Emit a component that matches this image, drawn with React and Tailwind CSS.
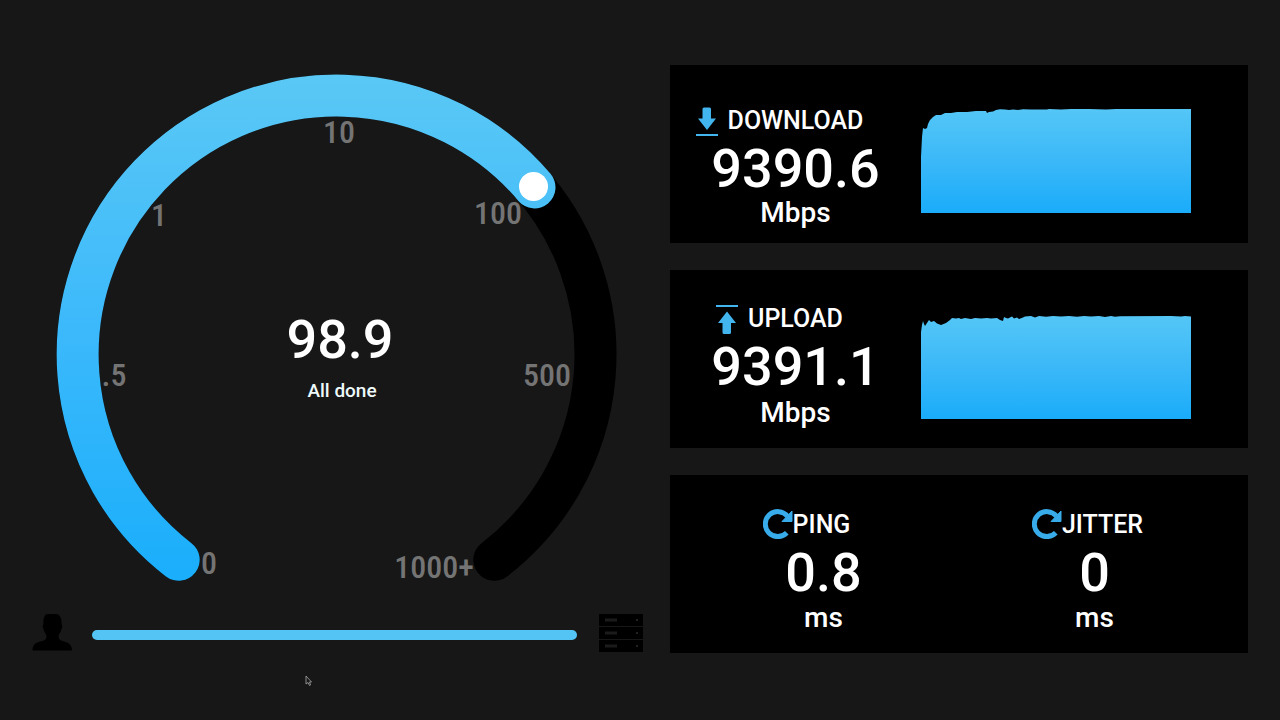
import React from "react";

const ticks = [
  { label: "0", x: 177, y: 499 },
  { label: ".5", x: 82, y: 311 },
  { label: "1", x: 127, y: 151 },
  { label: "10", x: 307, y: 68 },
  { label: "100", x: 466, y: 149 },
  { label: "500", x: 515, y: 311 },
  { label: "1000+", x: 402, y: 503 },
];

const downloadLine =
  "0,48 1,28 2,19 4,20 6,19 7,15 9,11 12,8 15,6 20,6 24,4 30,4 36,3 46,3 55,2 65,2 66,4 68,3 72,2.5 75,1 79,0.3 84,0.6 88,1 92,0.4 97,1 102,0.3 110,0.4 126,0.5 128,0.1 140,0.4 150,0.1 168,0.1 185,0.4 195,0 270,0";

const uploadLine =
  "0,17 1,10 2,6 3,9 4,11 6,8 8,5 10,7 13,6 16,8.5 20,10 25,8 29,5 31,3 35,3.5 38,3 40,4 44,3 50,4 54,3 60,3.5 66,3 70,3.5 76,3 79,5 82,6 83,2 85,3 87,3.5 91,1.5 93,3.5 96,2.5 98,4 102,2.5 104,1.5 110,1 114,2.5 118,1 125,1.8 132,1 140,1.6 148,1 156,1.8 163,1 170,1.6 178,1 184,2 190,1 194,1.8 199,1.2 250,1 260,1.6 264,1 270,1.6";

const Gauge = () => (
  <svg viewBox="0 0 611 506" className="w-full overflow-visible" role="img" aria-label="Speed gauge">
    <defs>
      <linearGradient id="ring" gradientUnits="userSpaceOnUse" x1="0" y1="0" x2="0" y2="506">
        <stop offset="0" stopColor="#5ac8f5" />
        <stop offset="0.5" stopColor="#3cb9fb" />
        <stop offset="1" stopColor="#1aaefb" />
      </linearGradient>
    </defs>
    <g fill="none" strokeWidth="42" strokeLinecap="round">
      <path d="M146.7 484.8A259 259 0 1 1 462.3 484.8" stroke="#000" />
      <path d="M146.7 484.8A259 259 0 1 1 502.5 112.4" stroke="url(#ring)" />
    </g>
    <circle cx="501.5" cy="111.5" r="14.5" fill="#fff" />
    {ticks.map((tick) => (
      <text
        key={tick.label}
        x={tick.x}
        y={tick.y}
        textAnchor="middle"
        className="fill-[#747474] font-['Roboto_Condensed','Roboto',sans-serif] text-[32px] font-medium"
      >
        {tick.label}
      </text>
    ))}
    <text x="308" y="283" textAnchor="middle" className="fill-white text-[54px] font-medium">
      98.9
    </text>
    <text x="310" y="322" textAnchor="middle" className="fill-[#eefafa] text-[19px] font-medium">
      All done
    </text>
  </svg>
);

const UserIcon = () => (
  <svg viewBox="0 0 40 38" className="w-10 shrink-0" aria-hidden="true">
    <path d="M14 0.5Q20 -1.5 26 0.5Q30 3 29.5 10Q31 12 29.5 15Q29 18 27 20Q25.500 25 29 26.500C36 28.500 40 30 40 36.500H0.500C0.500 30 4 28.500 12 26.500Q15.500 25 14 20.500Q12 18 11.500 15Q10 12 11.500 10Q11 3 14 0.500Z" />
  </svg>
);

const ServerIcon = () => (
  <svg viewBox="0 0 44 38" className="w-11 shrink-0" aria-hidden="true">
    {[0, 13, 26].map((y) => (
      <g key={y}>
        <rect y={y} width="44" height="12" />
        <rect x="6" y={y + 4.5} width="12" height="3" fill="#1b1b1b" />
        <rect x="37" y={y + 5} width="2" height="2" fill="#222" />
      </g>
    ))}
  </svg>
);

const DownloadIcon = () => (
  <svg viewBox="0 0 22 32" className="h-8 shrink-0 fill-[#42b4ee]" aria-hidden="true">
    <path d="M6.500 5Q6.500 3.500 8 3.500H13.500Q15 3.500 15 5V14.500H20L11 26L2 14.500H6.500Z" />
    <rect y="30" width="22" height="2" />
  </svg>
);

const UploadIcon = () => (
  <svg viewBox="0 0 22 32" className="h-8 shrink-0 fill-[#42b4ee]" aria-hidden="true">
    <rect y="3" width="22" height="2" />
    <path d="M11 9.500L20 21H15V30.500Q15 32 13.500 32H8Q6.500 32 6.500 30.500V21H2Z" />
  </svg>
);

const RedoIcon = () => (
  <svg viewBox="0 0 30 30" className="w-[30px] shrink-0" aria-hidden="true">
    <path d="M23.800 23.800A12.500 12.500 0 1 1 24.500 7.200" fill="none" stroke="#38acea" strokeWidth="5" />
    <path d="M29 2V12.500H19Z" fill="#38acea" stroke="#38acea" strokeLinejoin="round" />
  </svg>
);

const SpeedChart = ({ id, line }) => (
  <svg viewBox="0 0 270 104" preserveAspectRatio="none" className="h-[104px] min-w-0 flex-1" aria-hidden="true">
    <defs>
      <linearGradient id={id} x1="0" y1="0" x2="0" y2="1">
        <stop offset="0" stopColor="#54c6f6" />
        <stop offset="0.5" stopColor="#3bb8f8" />
        <stop offset="1" stopColor="#1aacfa" />
      </linearGradient>
    </defs>
    <polygon points={`${line} 270,104 0,104`} fill={`url(#${id})`} />
  </svg>
);

const Label = ({ children }) => <h2 className="pt-0.5 text-[25px] leading-7 font-medium">{children}</h2>;
const Value = ({ children }) => <p className="mt-2 text-[54px] leading-[54px] font-medium">{children}</p>;

const App = () => {
  return (
    <main className="grid min-h-screen grid-cols-[670fr_578fr] items-start bg-[#171717] pr-8 font-['Roboto',sans-serif] text-white">
      <section className="pt-[75px] pr-[27px] pl-8">
        <Gauge />
        <div className="mt-[33px] flex items-center gap-5">
          <UserIcon />
          <div
            role="progressbar"
            aria-label="Test progress"
            aria-valuenow={100}
            className="mt-1 mr-0.5 h-[10px] flex-1 rounded-full bg-[#54c4f4]"
          />
          <ServerIcon />
        </div>
      </section>

      <section className="flex flex-col gap-[27px] pt-[65px]">
        <article className="flex min-h-[178px] bg-black pr-[57px]">
          <div className="w-[251px] shrink-0 pt-[41px] text-center">
            <div className="flex h-7 items-center justify-center gap-[10px] pr-8">
              <DownloadIcon />
              <Label>DOWNLOAD</Label>
            </div>
            <Value>9390.6</Value>
            <p className="mt-[3px] text-[28px] leading-7 font-medium">Mbps</p>
          </div>
          <div className="flex flex-1 items-start pt-11">
            <SpeedChart id="download" line={downloadLine} />
          </div>
        </article>

        <article className="flex min-h-[178px] bg-black pr-[57px]">
          <div className="w-[251px] shrink-0 pt-[34px] text-center">
            <div className="flex h-7 items-center justify-center gap-[10px] pr-8">
              <UploadIcon />
              <Label>UPLOAD</Label>
            </div>
            <Value>9391.1</Value>
            <p className="mt-[5px] text-[28px] leading-7 font-medium">Mbps</p>
          </div>
          <div className="flex flex-1 items-start pt-[45px]">
            <SpeedChart id="upload" line={uploadLine} />
          </div>
        </article>

        <article className="grid min-h-[178px] grid-cols-2 bg-black px-[18px] pt-[35px] text-center">
          <div>
            <div className="flex h-7 items-center justify-center pr-[34px]">
              <RedoIcon />
              <Label>PING</Label>
            </div>
            <Value>0.8</Value>
            <p className="mt-1 text-[28px] leading-7 font-medium">ms</p>
          </div>
          <div>
            <div className="flex h-7 items-center justify-center pr-[14px]">
              <RedoIcon />
              <Label>JITTER</Label>
            </div>
            <Value>0</Value>
            <p className="mt-1 text-[28px] leading-7 font-medium">ms</p>
          </div>
        </article>
      </section>

      {/* mouse pointer */}
      <svg viewBox="0 0 8 12" className="absolute top-[675px] left-[305px] w-2" aria-hidden="true">
        <path d="M1 1V9L3 7.500L4.500 10.500L5.500 10L4.500 7H6.500Z" fill="#181818" stroke="#aaa" strokeWidth="0.800" />
      </svg>
    </main>
  );
};

export default App;
